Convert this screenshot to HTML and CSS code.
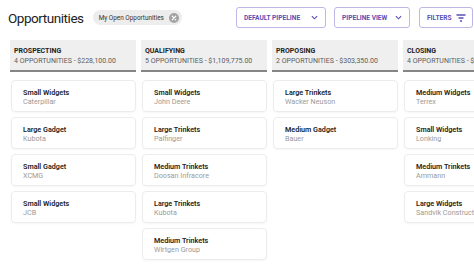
FILE: index.html
```html
<!DOCTYPE html>
<html lang="en">

<head>
    <meta charset="UTF-8" />
    <title>Opportunities</title>
    <link rel="stylesheet" href="styles.css">
</head>

<body>
    <header class="top">
        <h1 class="title">Opportunities</h1>
        <span class="chip">
            My Open Opportunities
            <svg class="chip-x" viewBox="0 0 10 10" width="10" height="10">
                <circle cx="5" cy="5" r="5" fill="#a3a3a3" />
                <path d="M3.2 3.2 L6.8 6.8 M6.8 3.2 L3.2 6.8" stroke="#fff" stroke-width="1.2" stroke-linecap="round" />
            </svg>
        </span>
        <div class="actions">
            <button class="btn btn-default">Default Pipeline
                <svg viewBox="0 0 8 5" width="7" height="5"><path d="M1 1 L4 4 L7 1" fill="none" stroke="#5b4fb3" stroke-width="1.3" /></svg>
            </button>
            <button class="btn btn-view">Pipeline View
                <svg viewBox="0 0 8 5" width="7" height="5"><path d="M1 1 L4 4 L7 1" fill="none" stroke="#5b4fb3" stroke-width="1.3" /></svg>
            </button>
            <button class="btn btn-filters">Filters
                <svg viewBox="0 0 10 8" width="10" height="8"><path d="M0.5 1 H9.5 M2.5 4 H7.5 M4 7 H6" fill="none" stroke="#5b4fb3" stroke-width="1.3" /></svg>
            </button>
        </div>
    </header>

    <div class="board">
        <section class="stage">
            <div class="stage-head">
                <div class="stage-name">PROSPECTING</div>
                <div class="stage-sum">4 OPPORTUNITIES - $228,100.00</div>
            </div>
            <div class="cards">
                <div class="card"><div class="card-title">Small Widgets</div><div class="card-sub">Caterpillar</div></div>
                <div class="card"><div class="card-title">Large Gadget</div><div class="card-sub">Kubota</div></div>
                <div class="card"><div class="card-title">Small Gadget</div><div class="card-sub">XCMG</div></div>
                <div class="card"><div class="card-title">Small Widgets</div><div class="card-sub">JCB</div></div>
            </div>
        </section>

        <section class="stage">
            <div class="stage-head">
                <div class="stage-name">QUALIFYING</div>
                <div class="stage-sum">5 OPPORTUNITIES - $1,109,775.00</div>
            </div>
            <div class="cards">
                <div class="card"><div class="card-title">Small Widgets</div><div class="card-sub">John Deere</div></div>
                <div class="card"><div class="card-title">Large Trinkets</div><div class="card-sub">Palfinger</div></div>
                <div class="card"><div class="card-title">Medium Trinkets</div><div class="card-sub">Doosan Infracore</div></div>
                <div class="card"><div class="card-title">Large Trinkets</div><div class="card-sub">Kubota</div></div>
                <div class="card"><div class="card-title">Medium Trinkets</div><div class="card-sub">Wirtgen Group</div></div>
            </div>
        </section>

        <section class="stage">
            <div class="stage-head">
                <div class="stage-name">PROPOSING</div>
                <div class="stage-sum">2 OPPORTUNITIES - $303,350.00</div>
            </div>
            <div class="cards">
                <div class="card"><div class="card-title">Large Trinkets</div><div class="card-sub">Wacker Neuson</div></div>
                <div class="card"><div class="card-title">Medium Gadget</div><div class="card-sub">Bauer</div></div>
            </div>
        </section>

        <section class="stage">
            <div class="stage-head">
                <div class="stage-name">CLOSING</div>
                <div class="stage-sum">4 OPPORTUNITIES - $</div>
            </div>
            <div class="cards">
                <div class="card"><div class="card-title">Medium Widgets</div><div class="card-sub">Terrex</div></div>
                <div class="card"><div class="card-title">Small Widgets</div><div class="card-sub">Lonking</div></div>
                <div class="card"><div class="card-title">Medium Trinkets</div><div class="card-sub">Ammann</div></div>
                <div class="card"><div class="card-title">Large Widgets</div><div class="card-sub">Sandvik Construction</div></div>
            </div>
        </section>
    </div>
</body>

</html>
```

FILE: styles.css
```css
* {
    box-sizing: border-box;
    margin: 0;
    padding: 0;
}

body {
    font-family: Roboto, "Liberation Sans", sans-serif;
    background: #fff;
    color: #222;
    width: 474px;
    height: 268px;
    overflow: hidden;
}

.top {
    display: flex;
    align-items: center;
    height: 35px;
    padding: 0 1px 0 8px;
}

.title {
    font-size: 13.5px;
    font-weight: 400;
    letter-spacing: -0.45px;
    color: #222;
}

.chip {
    display: flex;
    align-items: center;
    gap: 5px;
    height: 15px;
    margin-left: 9px;
    padding: 0 3px 0 6px;
    background: #ededed;
    border-radius: 8px;
    font-size: 6.4px;
    color: #333;
}

.actions {
    display: flex;
    gap: 8px;
    margin-left: auto;
}

.btn {
    display: flex;
    align-items: center;
    justify-content: space-between;
    height: 21px;
    padding: 0 7px 0 7px;
    background: #fff;
    border: 1px solid #bdb7e6;
    border-radius: 3px;
    color: #5b4fb3;
    font-family: Roboto, sans-serif;
    font-size: 6.6px;
    font-weight: 700;
    text-transform: uppercase;
    white-space: nowrap;
}

.btn-default {
    width: 90px;
}

.btn-view {
    width: 76px;
}

.btn-filters {
    width: 54px;
    margin-left: 1px;
    padding-right: 6px;
}

.board {
    display: flex;
    gap: 5px;
    padding: 5px 0 0 10px;
}

.stage {
    flex: 0 0 126px;
}

.stage-head {
    height: 32px;
    padding: 6px 4px 0;
    background: #efefef;
    border-bottom: 2px solid #858585;
    white-space: nowrap;
    overflow: hidden;
}

.stage-name {
    font-size: 7px;
    font-weight: 700;
    line-height: 10px;
    color: #222;
}

.stage-sum {
    font-size: 7px;
    line-height: 11px;
    color: #5c5c5c;
}

.cards {
    display: flex;
    flex-direction: column;
    gap: 5px;
    margin-top: 8px;
    padding-left: 1px;
}

.card {
    height: 32px;
    padding: 7px 11px;
    border: 1px solid #ececec;
    border-radius: 4px;
    box-shadow: 0 1px 2px rgba(0, 0, 0, 0.04);
    white-space: nowrap;
    overflow: hidden;
}

.card-title {
    font-size: 7.2px;
    font-weight: 600;
    line-height: 9px;
    color: #222;
}

.card-sub {
    font-size: 7.2px;
    line-height: 9px;
    color: #9a9a9a;
}
```
